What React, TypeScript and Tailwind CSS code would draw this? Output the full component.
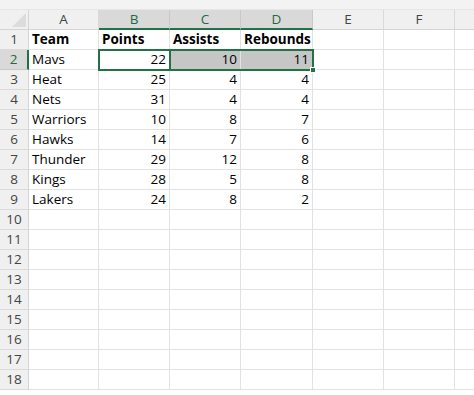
import React from "react";

const cols = ["A", "B", "C", "D", "E", "F", ""];
const widths = [70, 71, 71, 72, 71, 71, 40];
const data: (string | number)[][] = [
  ["Team", "Points", "Assists", "Rebounds"],
  ["Mavs", 22, 10, 11],
  ["Heat", 25, 4, 4],
  ["Nets", 31, 4, 4],
  ["Warriors", 10, 8, 7],
  ["Hawks", 14, 7, 6],
  ["Thunder", 29, 12, 8],
  ["Kings", 28, 5, 8],
  ["Lakers", 24, 8, 2],
];

export default function App() {
  const rows = Array.from({ length: 18 }, (_, i) => i + 1);
  const font = { fontFamily: '"Open Sans", "Noto Sans", sans-serif' };
  return (
    <div className="w-[474px] h-[395px] overflow-hidden bg-white relative" style={font}>
      <div className="h-[10px] bg-[#f3f3f3] border-b border-[#e6e6e6]" />
      {/* header row */}
      <div className="flex h-[20px] bg-[#f0f0f0]">
        <div className="w-[29px] shrink-0 border-r border-b border-[#d4d4d4] flex items-end justify-end p-[2px]">
          <div className="w-0 h-0 border-l-[14px] border-l-transparent border-b-[14px] border-b-[#dcdcdc]" />
        </div>
        {cols.map((c, i) => {
          const sel = c === "B" || c === "C" || c === "D";
          return (
            <div
              key={i}
              style={{ width: widths[i] }}
              className={
                "shrink-0 flex items-center justify-center text-[13.5px] border-r " +
                (sel
                  ? "bg-[#d9d9d9] text-[#1e6b3f] border-b-2 border-b-[#217346] border-r-[#c8c8c8]"
                  : "text-[#444] border-b border-b-[#d4d4d4] border-r-[#dadada]")
              }
            >
              {c}
            </div>
          );
        })}
      </div>
      {rows.map((r) => {
        const rowData = data[r - 1];
        const selRow = r === 2;
        return (
          <div key={r} className="flex h-[20px]">
            <div
              className={
                "w-[29px] shrink-0 flex items-center justify-center text-[13.5px] border-b " +
                (selRow
                  ? "bg-[#d9d9d9] text-[#1e6b3f] border-r-2 border-r-[#217346] border-b-[#c8c8c8]"
                  : "bg-[#f0f0f0] text-[#444] border-r border-r-[#d4d4d4] border-b-[#dadada]")
              }
            >
              {r}
            </div>
            {cols.map((c, i) => {
              const v = rowData ? rowData[i] : undefined;
              const isNum = typeof v === "number";
              const gray = selRow && (c === "C" || c === "D");
              return (
                <div
                  key={i}
                  style={{ width: widths[i] }}
                  className={
                    "shrink-0 flex items-center text-[13.5px] text-black border-r border-b border-[#e2e2e2] px-[3px] " +
                    (isNum ? "justify-end " : "justify-start ") +
                    (r === 1 ? "font-bold " : "") +
                    (gray ? "bg-[#c6c6c6]" : "")
                  }
                >
                  {v !== undefined ? String(v) : ""}
                </div>
              );
            })}
          </div>
        );
      })}
      {/* selection overlay B2:D2 */}
      <div className="absolute left-[98px] top-[49px] w-[216px] h-[22px] border-2 border-[#217346] pointer-events-none">
        <div className="absolute right-[-4px] bottom-[-4px] w-[6px] h-[6px] bg-[#217346] border border-white" />
      </div>
      <div className="absolute left-[98px] top-[49px] w-[73px] h-[22px] border-2 border-[#217346] pointer-events-none" />
    </div>
  );
}
